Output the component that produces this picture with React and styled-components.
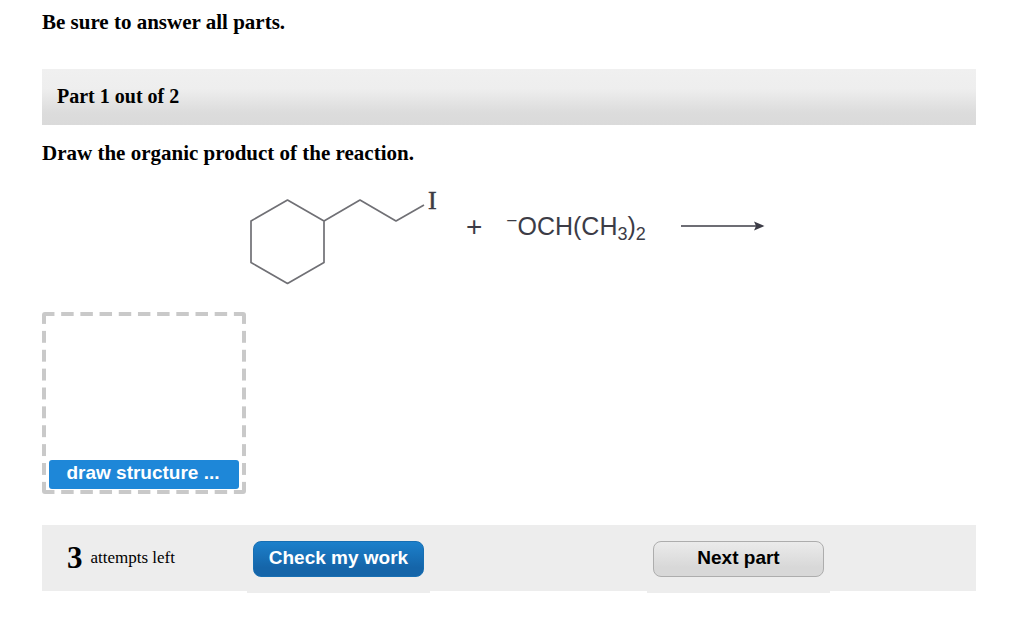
import React from "react";
import styled, { createGlobalStyle, css } from "styled-components";

const GlobalStyle = createGlobalStyle`
  * { box-sizing: border-box; }
  body {
    margin: 0;
    background: #fff;
    color: #000;
    font-family: "Liberation Serif", "Times New Roman", serif;
    font-size: 21px;
    line-height: 24px;
  }
`;

const Page = styled.main`
  padding: 10px 48px 24px 42px;
`;

const Instruction = styled.p`
  margin: 0;
  font-weight: bold;
`;

const PartHeader = styled.h2`
  margin: 35px 0 16px;
  padding: 15px 15px 17px;
  font-size: 20px;
  line-height: 24px;
  background: linear-gradient(#f0f0f0 0%, #eeeeee 35%, #dcdcdc 78%, #dadada 100%);
`;

const Reaction = styled.div`
  display: flex;
  align-items: flex-start;
  margin: 24px 0 23px 202px;
  color: #3c3c46;
  font-family: "Liberation Sans", Arial, sans-serif;
`;

const Molecule = styled.svg`
  flex: none;
  width: 200px;
  height: 100px;
  overflow: visible;
`;

const Plus = styled.span`
  margin: 26px 0 0 22px;
  font-size: 28px;
`;

const Formula = styled.span`
  display: flex;
  margin: 25px 0 0 24px;
  font-size: 25px;
  white-space: nowrap;
`;

const Charge = styled.span`
  font-size: 19px;
  line-height: 14px;
`;

const Sub = styled.sub`
  font-size: 18px;
  line-height: 0;
  vertical-align: -5px;
`;

const Arrow = styled.svg`
  flex: none;
  width: 86px;
  height: 12px;
  margin: 31px 0 0 34px;
`;

const dash = (dir) => css`linear-gradient(to ${dir}, #c9c9c9 12px, transparent 12px)`;

const StructureBox = styled.section`
  display: flex;
  align-items: flex-end;
  width: 204px;
  height: 182px;
  padding: 5px 7px;
  border-radius: 3px;
  background-image: ${dash("right")}, ${dash("right")}, ${dash("bottom")}, ${dash("bottom")};
  background-size:
    calc((100% - 12px) / 10) 4px,
    calc((100% - 12px) / 10) 4px,
    4px calc((100% - 12px) / 9),
    4px calc((100% - 12px) / 9);
  background-position: left top, left bottom, left top, right top;
  background-repeat: repeat-x, repeat-x, repeat-y, repeat-y;
`;

const Button = styled.button`
  font-family: "Liberation Sans", Arial, sans-serif;
  font-size: 19px;
  font-weight: bold;
  line-height: 24px;
  cursor: pointer;
`;

const DrawButton = styled(Button)`
  width: 100%;
  height: 29px;
  padding: 0 2px 4px 0;
  border: 0;
  border-radius: 3px;
  color: #fff;
  background: #1e87d8;
`;

const ActionButton = styled(Button)`
  width: 171px;
  height: 36px;
  padding: 0 0 3px;
  border-radius: 8px;
  border: 1px solid ${(p) => (p.$primary ? "#176fb3" : "#adadad")};
  color: ${(p) => (p.$primary ? "#fff" : "#000")};
  background: ${(p) =>
    p.$primary
      ? "linear-gradient(#1c80cb, #1565a9 75%)"
      : "linear-gradient(#ebebeb, #d8d8d8 75%)"};
`;

const Footer = styled.footer`
  display: grid;
  grid-template-columns: 205px 400fr 329fr;
  height: 66px;
  margin-top: 31px;
  background: #ededed;
`;

const Attempts = styled.p`
  display: flex;
  align-items: center;
  gap: 8px;
  height: 66px;
  margin: 0 0 0 25px;
  font-size: 17px;
`;

const Count = styled.strong`
  font-size: 31px;
`;

const ActionSlot = styled.div`
  width: 183px;
  height: 68px;
  padding: 16px 6px;
  background: #ededed;
`;

export default function App() {
  return (
    <>
      <GlobalStyle />
      <Page>
        <Instruction>Be sure to answer all parts.</Instruction>
        <PartHeader>Part 1 out of 2</PartHeader>
        <Instruction>Draw the organic product of the reaction.</Instruction>

        <Reaction>
          <Molecule viewBox="0 0 200 100" role="img" aria-label="(2-iodoethyl)cyclohexane">
            <g fill="none" stroke="#707075" strokeWidth="1.7" strokeLinejoin="round">
              <path d="M43.5 11 L80 32 V73.5 L43.5 94.5 L7 73.5 V32 Z" />
              <path d="M80 32 L116 11 L152 32 L180 16" />
            </g>
            <text
              x="184"
              y="20"
              fill="#3c3c46"
              stroke="#3c3c46"
              strokeWidth="0.5"
              fontFamily="Liberation Serif, Times New Roman, serif"
              fontSize="26"
            >
              I
            </text>
          </Molecule>
          <Plus>+</Plus>
          <Formula>
            <Charge>−</Charge>
            <span>
              OCH(CH<Sub>3</Sub>)<Sub>2</Sub>
            </span>
          </Formula>
          <Arrow viewBox="0 0 86 12" aria-hidden="true">
            <path d="M1 6 H77" stroke="#3c3c46" strokeWidth="1.6" />
            <path d="M74 1.5 L84.5 6 L74 10.5 L76 6 Z" fill="#3c3c46" />
          </Arrow>
        </Reaction>

        <StructureBox>
          <DrawButton type="button">draw structure ...</DrawButton>
        </StructureBox>

        <Footer>
          <Attempts>
            <Count>3</Count>
            <span>attempts left</span>
          </Attempts>
          <ActionSlot>
            <ActionButton type="button" $primary>
              Check my work
            </ActionButton>
          </ActionSlot>
          <ActionSlot>
            <ActionButton type="button">Next part</ActionButton>
          </ActionSlot>
        </Footer>
      </Page>
    </>
  );
}
